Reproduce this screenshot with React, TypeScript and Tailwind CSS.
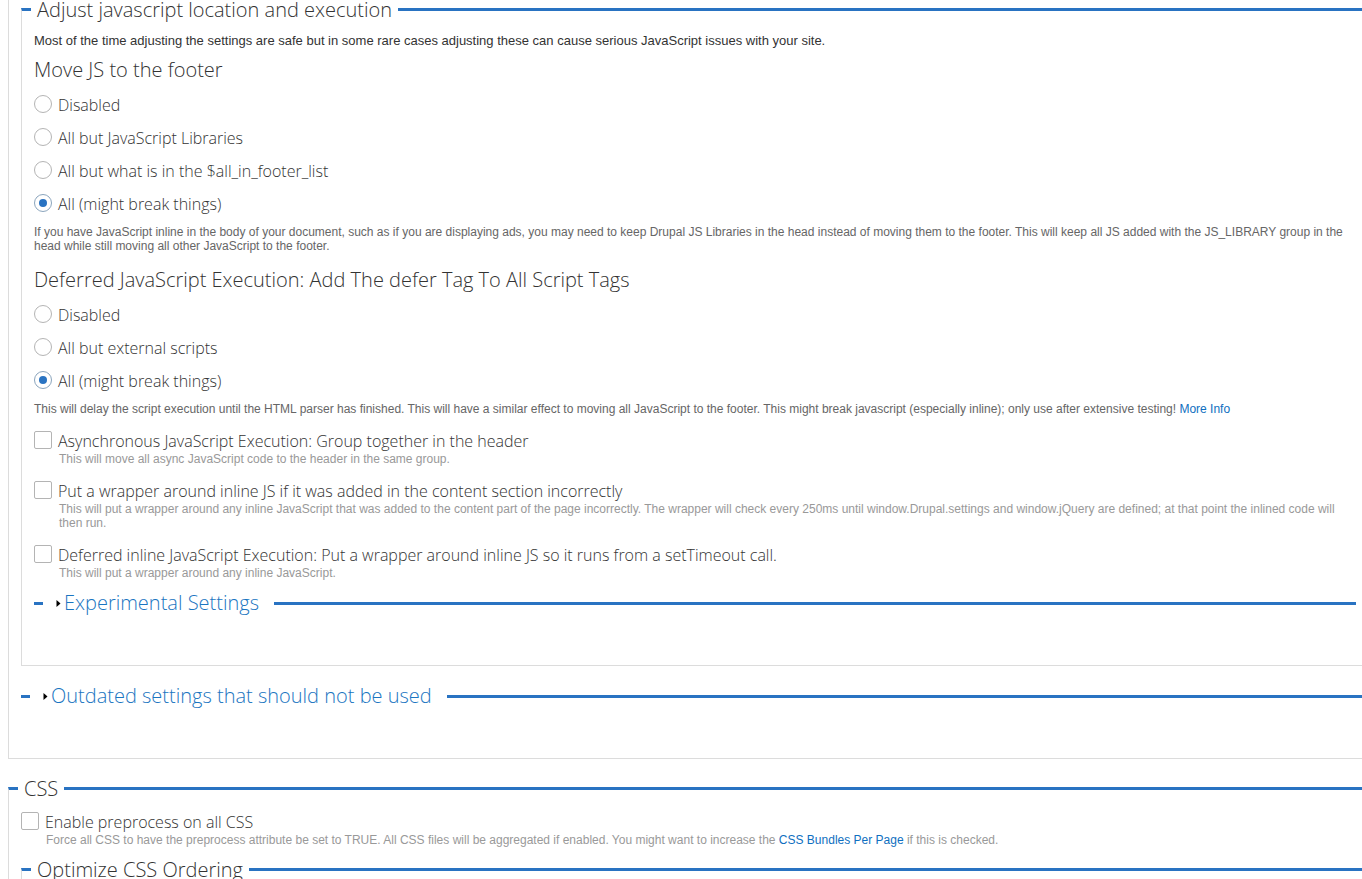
import { useId, useState, type ReactNode } from "react";

const legendText = "font-['Open_Sans',sans-serif] text-[20px] font-light";

function Panel({ title, children, className = "" }: { title?: string; children: ReactNode; className?: string }) {
  return (
    <fieldset
      className={`min-w-0 border-x border-[#dcdcdc] ${title ? "border-t-[3px] border-t-[#2973c2]" : ""} ${className}`}
    >
      {title && <legend className={`ml-[9px] px-1.5 leading-[27px] text-[#333] ${legendText}`}>{title}</legend>}
      {children}
    </fieldset>
  );
}

function CollapsedPanel({ title, className = "" }: { title: string; className?: string }) {
  return (
    <fieldset className={`min-w-0 border-t-[3px] border-[#2973c2] pb-12 ${className}`}>
      <legend className="ml-[9px] pr-[15px] pb-0.5 pl-[13px]">
        <a href="#" className={`flex items-center gap-1 leading-[25px] text-[#1a75c1] ${legendText}`}>
          <svg width="5" height="7" viewBox="0 0 5 7" className="mt-0.5 -mr-px shrink-0 text-black" aria-hidden="true">
            <path d="M0.5 0L4.5 3.5L0.5 7Z" fill="currentColor" />
          </svg>
          {title}
        </a>
      </legend>
    </fieldset>
  );
}

function RadioGroup({
  title,
  options,
  initial,
  children,
  className = "",
}: {
  title: string;
  options: string[];
  initial: number;
  children: ReactNode;
  className?: string;
}) {
  const name = useId();
  const [selected, setSelected] = useState(initial);
  return (
    <fieldset className={`min-w-0 ${className}`}>
      <legend className={`leading-[27px] text-[#333] ${legendText}`}>{title}</legend>
      <div className="py-[5px]">
        {options.map((option, index) => (
          <div key={option} className="flex h-[33px] items-center gap-1.5">
            <input
              type="radio"
              id={`${name}-${index}`}
              name={name}
              checked={selected === index}
              onChange={() => setSelected(index)}
              className="mb-0.5 grid size-[18px] shrink-0 appearance-none place-items-center rounded-full border border-[#b4b4b4] bg-white checked:border-[#8ba5bd] checked:before:size-2 checked:before:rounded-full checked:before:bg-[#2973c2] checked:before:content-['']"
            />
            <label
              htmlFor={`${name}-${index}`}
              className="font-['Open_Sans',sans-serif] text-[16px] leading-6 font-light text-[#333]"
            >
              {option}
            </label>
          </div>
        ))}
      </div>
      <p className="text-[12px] leading-[14px] text-[#666]">{children}</p>
    </fieldset>
  );
}

function CheckItem({ label, children }: { label: string; children: ReactNode }) {
  const id = useId();
  return (
    <div>
      <div className="flex h-6 items-start gap-1.5">
        <input
          type="checkbox"
          id={id}
          className="mt-[3px] grid size-[18px] shrink-0 appearance-none place-items-center rounded-[2px] border border-[#b4b4b4] bg-white checked:before:size-2.5 checked:before:bg-[#2973c2] checked:before:content-['']"
        />
        <label
          htmlFor={id}
          className="font-['Open_Sans',sans-serif] text-[16px] leading-[26px] font-light text-[#333]"
        >
          {label}
        </label>
      </div>
      <p className="pl-[25px] text-[12px] leading-[14px] text-[#999]">{children}</p>
    </div>
  );
}

function TextLink({ children }: { children: ReactNode }) {
  return (
    <a href="#" className="text-[#0f6fc0]">
      {children}
    </a>
  );
}

export default function App() {
  return (
    <main className="h-screen overflow-hidden bg-white pl-2 font-['Liberation_Sans',Arial,sans-serif]">
      <div className="-mr-5">
        <Panel className="border-b px-3">
          <Panel title="Adjust javascript location and execution" className="-mt-1 border-b">
            <div className="px-3 pt-2.5">
              <p className="text-[13px] leading-4 text-[#333]">
                Most of the time adjusting the settings are safe but in some rare cases adjusting these can cause
                serious JavaScript issues with your site.
              </p>
              <RadioGroup
                title="Move JS to the footer"
                options={[
                  "Disabled",
                  "All but JavaScript Libraries",
                  "All but what is in the $all_in_footer_list",
                  "All (might break things)",
                ]}
                initial={3}
                className="mt-[7px]"
              >
                If you have JavaScript inline in the body of your document, such as if you are displaying ads, you may
                need to keep Drupal JS Libraries in the head instead of moving them to the footer. This will keep all
                JS added with the JS_LIBRARY group in the head while still moving all other JavaScript to the footer.
              </RadioGroup>
              <RadioGroup
                title="Deferred JavaScript Execution: Add The defer Tag To All Script Tags"
                options={["Disabled", "All but external scripts", "All (might break things)"]}
                initial={2}
                className="mt-[13px]"
              >
                This will delay the script execution until the HTML parser has finished. This will have a similar
                effect to moving all JavaScript to the footer. This might break javascript (especially inline); only
                use after extensive testing! <TextLink>More Info</TextLink>
              </RadioGroup>
              <div className="mt-3 flex flex-col gap-3">
                <CheckItem label="Asynchronous JavaScript Execution: Group together in the header">
                  This will move all async JavaScript code to the header in the same group.
                </CheckItem>
                <CheckItem label="Put a wrapper around inline JS if it was added in the content section incorrectly">
                  This will put a wrapper around any inline JavaScript that was added to the content part of the page
                  incorrectly. The wrapper will check every 250ms until window.Drupal.settings and window.jQuery are
                  defined; at that point the inlined code will then run.
                </CheckItem>
                <CheckItem label="Deferred inline JavaScript Execution: Put a wrapper around inline JS so it runs from a setTimeout call.">
                  This will put a wrapper around any inline JavaScript.
                </CheckItem>
              </div>
              <CollapsedPanel title="Experimental Settings" className="mt-2.5" />
            </div>
          </Panel>
          <CollapsedPanel title="Outdated settings that should not be used" className="mt-[17px]" />
        </Panel>

        <Panel title="CSS" className="mt-4">
          <div className="px-3 pt-[7px]">
            <CheckItem label="Enable preprocess on all CSS">
              Force all CSS to have the preprocess attribute be set to TRUE. All CSS files will be aggregated if
              enabled. You might want to increase the <TextLink>CSS Bundles Per Page</TextLink> if this is checked.
            </CheckItem>
            <Panel title="Optimize CSS Ordering" className="mt-[9px]">
              <div className="h-12" />
            </Panel>
          </div>
        </Panel>
      </div>
    </main>
  );
}
